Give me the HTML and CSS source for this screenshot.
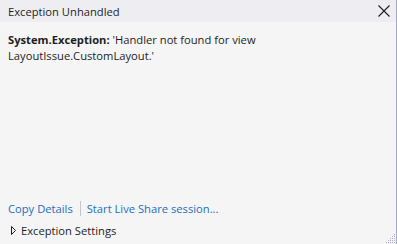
FILE: index.html
```html
<!DOCTYPE html>
<html>
<head>
<meta charset="utf-8">
<link rel="stylesheet" href="styles.css">
</head>
<body>
<div class="window">
  <div class="titlebar">
    <span class="title">Exception Unhandled</span>
    <svg class="close" width="12" height="12" viewBox="0 0 12 12"><path d="M0.5 0.5 L11.5 11.5 M11.5 0.5 L0.5 11.5" stroke="#1e1e1e" stroke-width="1.1" fill="none"/></svg>
  </div>
  <div class="body">
    <div class="message"><b>System.Exception:</b> 'Handler not found for view LayoutIssue.CustomLayout.'</div>
    <div class="spacer"></div>
    <div class="links">
      <a class="link">Copy Details</a>
      <span class="sep"></span>
      <a class="link">Start Live Share session...</a>
    </div>
    <div class="settings">
      <svg class="tri" width="5" height="9" viewBox="0 0 5 9"><path d="M0.5 0.5 L4.5 4.5 L0.5 8.5 Z" fill="none" stroke="#1e1e1e" stroke-width="1"/></svg>
      <span>Exception Settings</span>
    </div>
  </div>
  <svg class="grip" width="12" height="12" viewBox="0 0 12 12">
    <g fill="#a9aec4">
      <rect x="10" y="2" width="1" height="1"/>
      <rect x="10" y="4" width="1" height="1"/><rect x="8" y="4" width="1" height="1"/>
      <rect x="10" y="6" width="1" height="1"/><rect x="8" y="6" width="1" height="1"/><rect x="6" y="6" width="1" height="1"/>
      <rect x="10" y="8" width="1" height="1"/><rect x="8" y="8" width="1" height="1"/><rect x="6" y="8" width="1" height="1"/><rect x="4" y="8" width="1" height="1"/>
      <rect x="10" y="10" width="1" height="1"/><rect x="8" y="10" width="1" height="1"/><rect x="6" y="10" width="1" height="1"/><rect x="4" y="10" width="1" height="1"/><rect x="2" y="10" width="1" height="1"/>
    </g>
  </svg>
</div>
</body>
</html>
```
FILE: styles.css
```css
html, body {
  margin: 0;
  padding: 0;
}
body {
  width: 397px;
  height: 244px;
  overflow: hidden;
  font-family: "Open Sans", "Noto Sans", sans-serif;
  font-size: 11.2px;
  color: #1e1e1e;
}
.window {
  position: relative;
  width: 396px;
  height: 244px;
  border-right: 1px solid #a4aac6;
  background: #f5f5f5;
  display: flex;
  flex-direction: column;
}
.titlebar {
  height: 22px;
  background: #eeeef2;
  display: flex;
  align-items: center;
  justify-content: space-between;
  padding: 0 6px 0 8px;
  flex: none;
}
.close {
  display: block;
}
.body {
  flex: 1;
  display: flex;
  flex-direction: column;
  padding: 10px 8px 2px 8px;
}
.message {
  line-height: 16px;
  width: 270px;
}
.message b {
  font-weight: 700;
}
.spacer {
  flex: 1;
}
.links {
  display: flex;
  align-items: center;
  height: 20px;
}
.link {
  color: #1a6fc2;
}
.sep {
  width: 1px;
  height: 15px;
  background: #c5c5cc;
  margin: 0 6px 0 7px;
}
.settings {
  display: flex;
  align-items: center;
  height: 24px;
  margin-left: 3px;
}
.tri {
  display: block;
  margin-right: 5px;
}
.grip {
  position: absolute;
  right: 0;
  bottom: 0;
}
```
